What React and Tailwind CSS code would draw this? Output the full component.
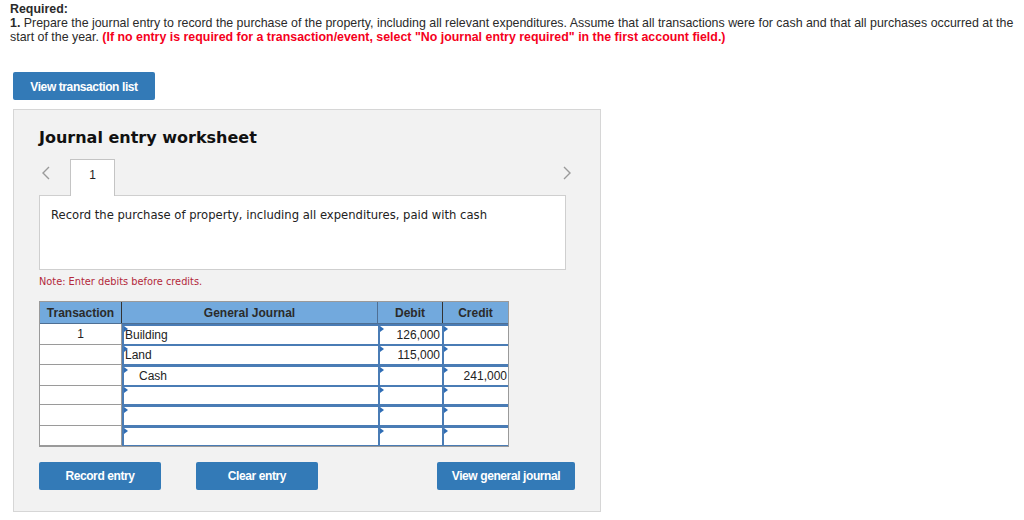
import React from "react";

const Tri = () => (
  <span className="absolute left-0 top-0 w-0 h-0 border-t-[3px] border-b-[3px] border-l-[4px] border-t-transparent border-b-transparent border-l-[#2f6db5]" />
);

const rows = [
  { t: "1", acct: "Building", indent: false, debit: "126,000", credit: "" },
  { t: "", acct: "Land", indent: false, debit: "115,000", credit: "" },
  { t: "", acct: "Cash", indent: true, debit: "", credit: "241,000" },
  { t: "", acct: "", indent: false, debit: "", credit: "" },
  { t: "", acct: "", indent: false, debit: "", credit: "" },
  { t: "", acct: "", indent: false, debit: "", credit: "" },
];

const Chevron = ({ dir }) => (
  <svg width="8" height="14" viewBox="0 0 8 14" className="block">
    {dir === "left" ? (
      <polyline points="7,1 1,7 7,13" fill="none" stroke="#9a9a9a" strokeWidth="1.4" />
    ) : (
      <polyline points="1,1 7,7 1,13" fill="none" stroke="#9a9a9a" strokeWidth="1.4" />
    )}
  </svg>
);

const Btn = ({ children, w }) => (
  <button
    className={`${w} h-[28px] rounded-[2px] bg-[#337ab7] text-white text-[12px] font-bold tracking-[-0.4px] flex items-center justify-center pt-px`}
    style={{ fontFamily: '"Liberation Sans", Arial, sans-serif' }}
  >
    {children}
  </button>
);

export default function App() {
  return (
    <div className="w-[1024px] h-[520px] bg-white overflow-hidden" style={{ fontFamily: '"Liberation Sans", Arial, sans-serif' }}>
      <div className="pl-[10px] pt-[2px] text-[12.4px] leading-[14px] text-[#2a2a2a] whitespace-nowrap">
        <div className="font-bold">Required:</div>
        <div>
          <span className="font-bold">1.</span> Prepare the journal entry to record the purchase of the property, including all relevant expenditures. Assume that all transactions were for cash and that all purchases occurred at the
        </div>
        <div>
          start of the year.{" "}
          <span className="font-bold text-[#f5001c]">
            (If no entry is required for a transaction/event, select "No journal entry required" in the first account field.)
          </span>
        </div>
      </div>

      <div className="pl-[13px] mt-[28px]">
        <Btn w="w-[142px]">View transaction list</Btn>
      </div>

      <div className="ml-[13px] mt-[9px] w-[588px] h-[403px] border border-[#d6d6d6] bg-[#f2f2f2] pl-[25px] pt-[18px]">
        <div
          className="text-[16px] leading-[19px] font-bold text-[#111]"
          style={{ fontFamily: '"DejaVu Sans", Verdana, sans-serif' }}
        >
          Journal entry worksheet
        </div>

        <div className="mt-[12px] w-[534px] flex items-start">
          <div className="w-[31px] pt-[7px] pl-[3px]">
            <Chevron dir="left" />
          </div>
          <div className="relative z-10 w-[45px] h-[37px] -mb-px bg-white border border-b-0 border-[#c4c4c4] flex items-center justify-center pb-[6px] text-[12px] text-[#222]">
            1
          </div>
          <div className="flex-1" />
          <div className="pt-[7px] pr-[2px]">
            <Chevron dir="right" />
          </div>
        </div>

        <div
          className="w-[527px] h-[75px] bg-white border border-[#cfcfcf] pl-[11px] pt-[12px] text-[11.6px] leading-[15px] text-[#222]"
          style={{ fontFamily: '"DejaVu Sans", Verdana, sans-serif' }}
        >
          Record the purchase of property, including all expenditures, paid with cash
        </div>

        <div
          className="mt-[6px] text-[9.8px] leading-[12px] text-[#b3283a]"
          style={{ fontFamily: '"DejaVu Sans", Verdana, sans-serif' }}
        >
          Note: Enter debits before credits.
        </div>

        <div className="mt-[13px] w-[470px] border border-[#9a9a9a] text-[12px] text-[#222]">
          <div className="grid grid-cols-[82px_256px_65px_65px] h-[22px] bg-[#72a9dd] border-b border-[#4e6f93] font-bold text-[#2b2b2b]">
            <div className="flex items-center justify-center border-r border-[#333]">Transaction</div>
            <div className="flex items-center justify-center border-r border-[#4f6f94]">General Journal</div>
            <div className="flex items-center justify-center border-r border-[#333]">Debit</div>
            <div className="flex items-center justify-center">Credit</div>
          </div>
          {rows.map((r, i) => (
            <div key={i} className="grid grid-cols-[82px_256px_65px_65px] h-[20.33px] bg-white">
              <div className="flex items-center justify-center border-b border-r border-[#9a9a9a]">{r.t}</div>
              <div className={`relative flex items-center border-t-2 border-l-2 border-b border-[#4a7cb5] ${r.indent ? "pl-[15px]" : "pl-[1px]"}`}>
                <Tri />
                {r.acct}
              </div>
              <div className="relative flex items-center justify-end pr-[2px] border-t-2 border-l-2 border-r border-b border-[#4a7cb5]">
                <Tri />
                {r.debit}
              </div>
              <div className="relative flex items-center justify-end pr-[1px] border-t-2 border-l border-b border-[#4a7cb5]">
                <Tri />
                {r.credit}
              </div>
            </div>
          ))}
        </div>

        <div className="mt-[15px] flex items-center">
          <Btn w="w-[122px]">Record entry</Btn>
          <div className="ml-[35px]">
            <Btn w="w-[122px]">Clear entry</Btn>
          </div>
          <div className="ml-[119px]">
            <Btn w="w-[138px]">View general journal</Btn>
          </div>
        </div>
      </div>
    </div>
  );
}
